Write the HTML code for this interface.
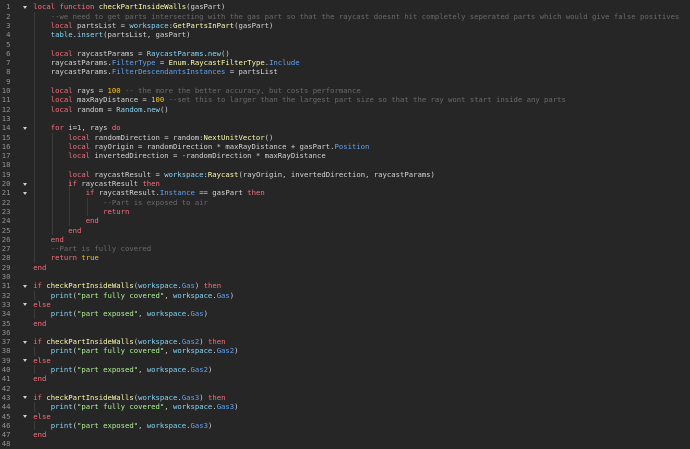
<!DOCTYPE html>
<html><head><meta charset="utf-8"><style>
html,body{margin:0;padding:0;background:#262626;width:690px;height:447px;overflow:hidden}
.ed{position:absolute;left:0;top:2.4px;font-family:"DejaVu Sans Mono","Liberation Mono",monospace;font-size:7.26px;line-height:9.3px;white-space:pre;color:#d4d4d4}
.ln{position:absolute;left:0;width:10.5px;text-align:right;color:#909090}
.fd{position:absolute;left:23px;width:0;height:0;border-left:2.5px solid transparent;border-right:2.5px solid transparent;border-top:3px solid #d0d0d0}
.cd{position:absolute;left:33.3px}
.g{position:absolute;width:1px;background:#3c3c3c}
.k{color:#f86d7c}.f{color:#fdfbac}.c{color:#6a6a6a}.b{color:#84d6f7}.p{color:#61a1f1}.n{color:#ffc600}.s{color:#adf195}
</style></head><body>
<div id="g"></div>
<div class="ed" id="ed"></div>
<script>
var L=[
'<span class="k">local function</span> <span class="f">checkPartInsideWalls</span>(gasPart)',
'    <span class="c">--we need to get parts intersecting with the gas part so that the raycast doesnt hit completely seperated parts which would give false positives</span>',
'    <span class="k">local</span> partsList = <span class="b">workspace</span>:<span class="f">GetPartsInPart</span>(gasPart)',
'    <span class="b">table</span>.<span class="b">insert</span>(partsList, gasPart)',
'',
'    <span class="k">local</span> raycastParams = <span class="b">RaycastParams</span>.<span class="b">new</span>()',
'    raycastParams.<span class="p">FilterType</span> = <span class="f">Enum</span>.<span class="f">RaycastFilterType</span>.<span class="p">Include</span>',
'    raycastParams.<span class="p">FilterDescendantsInstances</span> = partsList',
'',
'    <span class="k">local</span> rays = <span class="n">100</span> <span class="c">-- the more the better accuracy, but costs performance</span>',
'    <span class="k">local</span> maxRayDistance = <span class="n">100</span> <span class="c">--set this to larger than the largest part size so that the ray wont start inside any parts</span>',
'    <span class="k">local</span> random = <span class="b">Random</span>.<span class="b">new</span>()',
'',
'    <span class="k">for</span> i=<span class="n">1</span>, rays <span class="k">do</span>',
'        <span class="k">local</span> randomDirection = random:<span class="f">NextUnitVector</span>()',
'        <span class="k">local</span> rayOrigin = randomDirection * maxRayDistance + gasPart.<span class="p">Position</span>',
'        <span class="k">local</span> invertedDirection = -randomDirection * maxRayDistance',
'',
'        <span class="k">local</span> raycastResult = <span class="b">workspace</span>:<span class="f">Raycast</span>(rayOrigin, invertedDirection, raycastParams)',
'        <span class="k">if</span> raycastResult <span class="k">then</span>',
'            <span class="k">if</span> raycastResult.<span class="p">Instance</span> == gasPart <span class="k">then</span>',
'                <span class="c">--Part is exposed to air</span>',
'                <span class="k">return</span>',
'            <span class="k">end</span>',
'        <span class="k">end</span>',
'    <span class="k">end</span>',
'    <span class="c">--Part is fully covered</span>',
'    <span class="k">return</span> <span class="n">true</span>',
'<span class="k">end</span>',
''];
['','2','3'].forEach(function(x){
L.push('<span class="k">if</span> <span class="f">checkPartInsideWalls</span>(<span class="b">workspace</span>.<span class="p">Gas'+x+'</span>) <span class="k">then</span>');
L.push('    <span class="b">print</span>(<span class="s">"part fully covered"</span>, <span class="b">workspace</span>.<span class="p">Gas'+x+'</span>)');
L.push('<span class="k">else</span>');
L.push('    <span class="b">print</span>(<span class="s">"part exposed"</span>, <span class="b">workspace</span>.<span class="p">Gas'+x+'</span>)');
L.push('<span class="k">end</span>');
L.push('');
});
L.push('');
var folds=[1,14,20,21,31,33,37,39,43,45];
var h='',lh=9.3;
for(var i=0;i<48;i++){
 var y=i*lh;
 h+='<div class="ln" style="top:'+y+'px">'+(i+1)+'</div>';
 if(folds.indexOf(i+1)>=0)h+='<div class="fd" style="top:'+(y+3.5)+'px"></div>';
 h+='<div class="cd" style="top:'+y+'px">'+(L[i]||'')+'</div>';
}
document.getElementById('ed').innerHTML=h;
var G=[[0,2,28],[1,15,25],[2,20,24],[3,22,23],[0,32,32],[0,34,34],[0,38,38],[0,40,40],[0,44,44],[0,46,46]];
var gh='',cw=4.37;
G.forEach(function(a){
 var x=33.3+a[0]*4*cw+1;
 gh+='<div class="g" style="left:'+x+'px;top:'+(2.4+(a[1]-1)*lh)+'px;height:'+((a[2]-a[1]+1)*lh)+'px"></div>';
});
document.getElementById('g').innerHTML=gh;
</script>
</body></html>
